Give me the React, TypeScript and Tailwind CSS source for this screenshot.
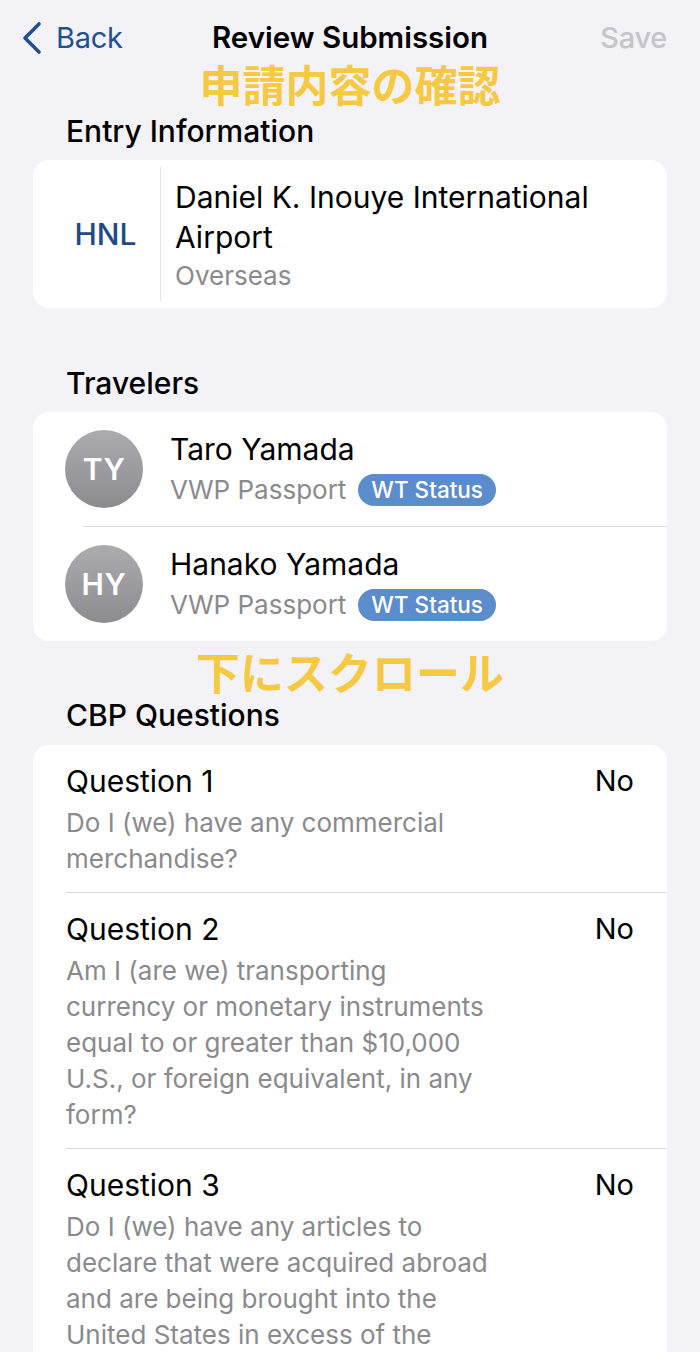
import React from "react";

const font = { fontFamily: 'Inter, "Noto Sans", "Noto Sans CJK JP", sans-serif' };
const jp = { fontFamily: '"Noto Sans CJK JP", sans-serif' };

function Avatar({ initials }: { initials: string }) {
  return (
    <div className="w-[78px] h-[78px] rounded-full bg-gradient-to-b from-[#ababb0] to-[#8b8b90] flex items-center justify-center shrink-0">
      <span className="text-white text-[30px] font-semibold tracking-[0.5px]">{initials}</span>
    </div>
  );
}

function Traveler({ name, initials }: { name: string; initials: string }) {
  return (
    <div className="flex items-center pl-[32px] h-[114px]">
      <Avatar initials={initials} />
      <div className="ml-[27px] flex flex-col">
        <div className="text-[30px] leading-[36px] text-black">{name}</div>
        <div className="flex items-center mt-[6px]">
          <span className="text-[26px] leading-[34px] text-[#8a8a8e]">VWP Passport</span>
          <span className="ml-[12px] bg-[#5b8ccb] text-white text-[22.5px] font-medium leading-[32px] px-[13px] rounded-full">WT Status</span>
        </div>
      </div>
    </div>
  );
}

function Question({ title, lines, last }: { title: string; lines: string[]; last?: boolean }) {
  return (
    <div className={`ml-[33px] ${last ? "" : "border-b border-[#dcdce0]"}`}>
      <div className="flex justify-between pr-[33px] pt-[18px] pb-[15px]">
        <div className="flex flex-col">
          <div className="text-[30px] leading-[36px] text-black">{title}</div>
          <div className="mt-[6px] text-[26px] leading-[36px] text-[#8a8a8e]">
            {lines.map((l, i) => (
              <div key={i}>{l}</div>
            ))}
          </div>
        </div>
        <div className="text-[29px] leading-[36px] text-black">No</div>
      </div>
    </div>
  );
}

export default function App() {
  return (
    <div style={font} className="w-[700px] h-[1352px] bg-[#f2f2f7] overflow-hidden">
      {/* Nav */}
      <div className="relative h-[66px] flex items-center">
        <div className="flex items-center pl-[20px] pt-[10px]">
          <svg width="24" height="36" viewBox="0 0 24 36" fill="none">
            <path d="M19 4 L5 18 L19 32" stroke="#22508c" strokeWidth="3.6" strokeLinecap="round" strokeLinejoin="round" />
          </svg>
          <span className="ml-[12px] text-[29px] text-[#22508c] tracking-[-0.3px]">Back</span>
        </div>
        <div className="absolute left-0 right-0 top-[17px] text-center text-[29.5px] leading-[40px] font-semibold text-black pointer-events-none">
          Review Submission
        </div>
        <div className="ml-auto pr-[33px] pt-[10px] text-[29px] text-[#c4c4c9] font-medium tracking-[-0.3px]">Save</div>
      </div>

      <div className="text-center text-[43px] leading-[46px] font-bold text-[#f6c945] mt-[-6px]" style={jp}>
        申請内容の確認
      </div>

      <div className="pl-[66px] mt-[7px] text-[30px] leading-[36px] font-medium text-black">Entry Information</div>

      <div className="mx-[33px] mt-[11px] bg-white rounded-[16px] h-[148px] flex items-stretch">
        <div className="w-[127px] flex items-center justify-center">
          <span className="text-[30px] text-[#1f4a82] font-medium ml-[18px]">HNL</span>
        </div>
        <div className="w-px bg-[#e3e3e8] my-[7px]" />
        <div className="pl-[14px] pt-[17px] flex flex-col">
          <div className="text-[30px] leading-[40px] text-black">
            Daniel K. Inouye International
            <br />
            Airport
          </div>
          <div className="text-[26px] leading-[34px] text-[#8a8a8e] mt-[2px]">Overseas</div>
        </div>
      </div>

      <div className="pl-[66px] mt-[57px] text-[30px] leading-[36px] font-medium text-black">Travelers</div>

      <div className="mx-[33px] mt-[11px] bg-white rounded-[16px] overflow-hidden">
        <Traveler name="Taro Yamada" initials="TY" />
        <div className="ml-[50px] h-px bg-[#dcdce0]" />
        <Traveler name="Hanako Yamada" initials="HY" />
      </div>

      <div className="text-center text-[44px] leading-[48px] font-bold text-[#f6c945] mt-[6px]" style={jp}>
        下にスクロール
      </div>

      <div className="pl-[66px] mt-[2px] text-[30px] leading-[36px] font-medium text-black">CBP Questions</div>

      <div className="mx-[33px] mt-[12px] bg-white rounded-[16px]">
        <Question title="Question 1" lines={["Do I (we) have any commercial", "merchandise?"]} />
        <Question
          title="Question 2"
          lines={[
            "Am I (are we) transporting",
            "currency or monetary instruments",
            "equal to or greater than $10,000",
            "U.S., or foreign equivalent, in any",
            "form?",
          ]}
        />
        <Question
          title="Question 3"
          last
          lines={[
            "Do I (we) have any articles to",
            "declare that were acquired abroad",
            "and are being brought into the",
            "United States in excess of the",
            "Customs duty exemption allowed?",
          ]}
        />
      </div>
    </div>
  );
}
